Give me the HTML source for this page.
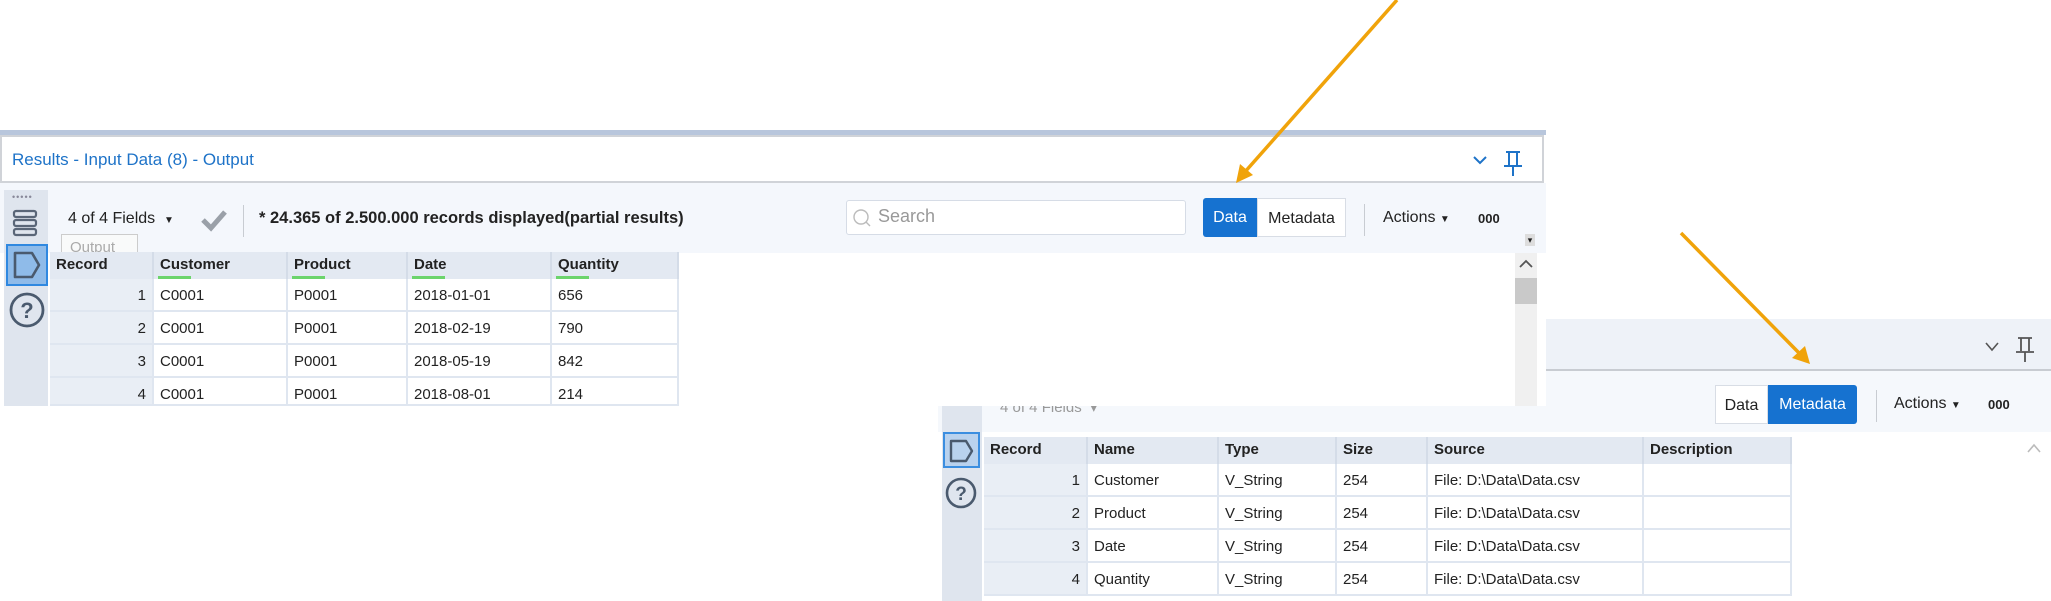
<!DOCTYPE html>
<html><head><meta charset="utf-8"><style>
*{margin:0;padding:0;box-sizing:border-box}
body{width:2051px;height:601px;background:#fff;position:relative;overflow:hidden;font-family:"Liberation Sans",sans-serif;font-size:15px;color:#222}
.a{position:absolute}
.cell{position:absolute;height:33px;line-height:33px;padding-left:6px;background:#fff;border-right:2px solid #dfe6f0;border-bottom:2px solid #dfe6f0;white-space:nowrap}
.rec{background:#e9eef5;text-align:right;padding-right:6px}
.hd{position:absolute;height:27px;line-height:26px;padding-left:6px;background:#e3e9f2;font-weight:bold;border-right:2px solid #d4dce8}
.btn{position:absolute;height:39px;line-height:39px;text-align:center;font-size:16px}
</style></head><body>

<!-- Panel 2 (behind) -->
<div class="a" style="left:938px;top:319px;width:1113px;height:52px;background:#eef2f8;border-bottom:2px solid #c8ccd2"></div>
<div class="a" style="left:938px;top:371px;width:1113px;height:61px;background:#f5f8fc"></div>
<div class="a" style="left:938px;top:432px;width:1113px;height:169px;background:#fff"></div>
<svg class="a" style="left:1984px;top:335px" width="60" height="30"><path d="M2 8 L8 15 L14 8" stroke="#555" stroke-width="1.6" fill="none"/><path d="M34 3 H48 M37 3 V16 M45 3 V16 M32 17 H50 M41 17 V27" stroke="#555" stroke-width="1.8" fill="none"/></svg>
<div class="a" style="left:1000px;top:398px;color:#999;font-size:15px">4 of 4 Fields &nbsp;▾</div>
<div class="btn" style="left:1715px;top:385px;width:53px;background:#fff;border:1px solid #d8dde5">Data</div>
<div class="btn" style="left:1768px;top:385px;width:89px;background:#1672d0;color:#fff;border-radius:0 3px 3px 0">Metadata</div>
<div class="a" style="left:1876px;top:390px;width:1px;height:32px;background:#c8ccd2"></div>
<div class="a" style="left:1894px;top:395px;font-size:16px">Actions <span style="font-size:10px">▼</span></div>
<div class="a" style="left:1988px;top:397px;font-size:13px;font-weight:bold">000</div>
<div class="a" style="left:942px;top:406px;width:40px;height:195px;background:#dfe5ee"></div>
<div class="a" style="left:943px;top:432px;width:37px;height:36px;background:#b9d2ee;border:2px solid #3b8ee0"></div>
<svg class="a" style="left:948px;top:438px" width="28" height="26"><path d="M3 3 H18 L24 13 L18 23 H3 Z" stroke="#4a5a6e" stroke-width="2.4" fill="none" stroke-linejoin="round"/></svg>
<svg class="a" style="left:944px;top:476px" width="34" height="34"><circle cx="17" cy="17" r="14" stroke="#4a5a6e" stroke-width="2.6" fill="none"/><text x="17" y="24" font-size="19" font-weight="bold" text-anchor="middle" fill="#4a5a6e" font-family="Liberation Sans">?</text></svg>
<svg class="a" style="left:2026px;top:442px" width="16" height="14"><path d="M2 10 L8 3 L14 10" stroke="#bbb" stroke-width="1.6" fill="none"/></svg>

<div class="hd" style="left:984px;top:437px;width:104px">Record</div>
<div class="hd" style="left:1088px;top:437px;width:131px">Name</div>
<div class="hd" style="left:1219px;top:437px;width:118px">Type</div>
<div class="hd" style="left:1337px;top:437px;width:91px">Size</div>
<div class="hd" style="left:1428px;top:437px;width:216px">Source</div>
<div class="hd" style="left:1644px;top:437px;width:148px">Description</div>

<div class="cell rec" style="left:984px;top:464px;width:104px">1</div><div class="cell" style="left:1088px;top:464px;width:131px">Customer</div><div class="cell" style="left:1219px;top:464px;width:118px">V_String</div><div class="cell" style="left:1337px;top:464px;width:91px">254</div><div class="cell" style="left:1428px;top:464px;width:216px">File: D:\Data\Data.csv</div><div class="cell" style="left:1644px;top:464px;width:148px"></div>
<div class="cell rec" style="left:984px;top:497px;width:104px">2</div><div class="cell" style="left:1088px;top:497px;width:131px">Product</div><div class="cell" style="left:1219px;top:497px;width:118px">V_String</div><div class="cell" style="left:1337px;top:497px;width:91px">254</div><div class="cell" style="left:1428px;top:497px;width:216px">File: D:\Data\Data.csv</div><div class="cell" style="left:1644px;top:497px;width:148px"></div>
<div class="cell rec" style="left:984px;top:530px;width:104px">3</div><div class="cell" style="left:1088px;top:530px;width:131px">Date</div><div class="cell" style="left:1219px;top:530px;width:118px">V_String</div><div class="cell" style="left:1337px;top:530px;width:91px">254</div><div class="cell" style="left:1428px;top:530px;width:216px">File: D:\Data\Data.csv</div><div class="cell" style="left:1644px;top:530px;width:148px"></div>
<div class="cell rec" style="left:984px;top:563px;width:104px">4</div><div class="cell" style="left:1088px;top:563px;width:131px">Quantity</div><div class="cell" style="left:1219px;top:563px;width:118px">V_String</div><div class="cell" style="left:1337px;top:563px;width:91px">254</div><div class="cell" style="left:1428px;top:563px;width:216px">File: D:\Data\Data.csv</div><div class="cell" style="left:1644px;top:563px;width:148px"></div>

<!-- Panel 1 (front) -->
<div class="a" style="left:0;top:130px;width:1546px;height:5px;background:#b8c6dc"></div>
<div class="a" style="left:0;top:135px;width:1544px;height:48px;background:#fff;border:2px solid #d0d3d8"></div>
<div class="a" style="left:12px;top:150px;color:#1e73c8;font-size:17px">Results - Input Data (8) - Output</div>
<svg class="a" style="left:1472px;top:148px" width="60" height="30"><path d="M2 9 L8 15 L14 9" stroke="#1e73c8" stroke-width="2" fill="none"/><path d="M34 4 H48 M37 4 V17 M45 4 V17 M32 18 H50 M41 18 V28" stroke="#1e73c8" stroke-width="2" fill="none"/></svg>
<div class="a" style="left:0;top:183px;width:1546px;height:70px;background:#f4f7fc"></div>
<div class="a" style="left:0;top:253px;width:1546px;height:153px;background:#fff"></div>
<div class="a" style="left:4px;top:190px;width:44px;height:216px;background:#dfe5ee"></div>
<div class="a" style="left:12px;top:192px;color:#889;font-size:9px;letter-spacing:1px">•••••</div>
<svg class="a" style="left:12px;top:208px" width="30" height="30"><rect x="2" y="3" width="22" height="6" rx="2" stroke="#5a6678" stroke-width="2.2" fill="none"/><rect x="2" y="12" width="22" height="6" rx="2" stroke="#5a6678" stroke-width="2.2" fill="none"/><rect x="2" y="21" width="22" height="6" rx="2" stroke="#5a6678" stroke-width="2.2" fill="none"/></svg>
<div class="a" style="left:6px;top:244px;width:42px;height:42px;background:#8fbbe9;border:2px solid #2f88e0"></div>
<svg class="a" style="left:12px;top:250px" width="32" height="30"><path d="M3 3 H20 L27 15 L20 27 H3 Z" stroke="#4a5a6e" stroke-width="2.6" fill="none" stroke-linejoin="round"/></svg>
<svg class="a" style="left:7px;top:290px" width="40" height="40"><circle cx="20" cy="20" r="16" stroke="#4a5a6e" stroke-width="2.8" fill="none"/><text x="20" y="28" font-size="22" font-weight="bold" text-anchor="middle" fill="#4a5a6e" font-family="Liberation Sans">?</text></svg>
<div class="a" style="left:68px;top:210px;font-size:16px">4 of 4 Fields &nbsp;<span style="font-size:10px">▼</span></div>
<svg class="a" style="left:200px;top:207px" width="28" height="26"><path d="M3 13 L11 21 L25 5" stroke="#9aa0a8" stroke-width="5" fill="none"/></svg>
<div class="a" style="left:243px;top:205px;width:1px;height:32px;background:#c8ccd2"></div>
<div class="a" style="left:259px;top:209px;font-size:16.5px;font-weight:bold">* 24.365 of 2.500.000 records displayed(partial results)</div>
<div class="a" style="left:61px;top:234px;width:77px;height:28px;border:1px solid #ccc;background:rgba(250,250,250,.9);color:#aaa;font-size:15px;line-height:26px;padding-left:8px">Output</div>
<div class="a" style="left:846px;top:200px;width:340px;height:35px;background:#fff;border:1px solid #d6dce6;border-radius:3px"></div>
<svg class="a" style="left:852px;top:208px" width="20" height="20"><circle cx="9" cy="9" r="7" stroke="#bbb" stroke-width="1.4" fill="none"/><path d="M14 14 L18 18" stroke="#bbb" stroke-width="1.4"/></svg>
<div class="a" style="left:878px;top:206px;color:#999;font-size:18px">Search</div>
<div class="btn" style="left:1203px;top:198px;width:54px;background:#1672d0;color:#fff;border-radius:3px 0 0 3px">Data</div>
<div class="btn" style="left:1257px;top:198px;width:89px;background:#fff;border:1px solid #d8dde5">Metadata</div>
<div class="a" style="left:1364px;top:204px;width:1px;height:32px;background:#c8ccd2"></div>
<div class="a" style="left:1383px;top:209px;font-size:16px">Actions <span style="font-size:10px">▼</span></div>
<div class="a" style="left:1478px;top:211px;font-size:13px;font-weight:bold">000</div>
<div class="a" style="left:1515px;top:253px;width:22px;height:153px;background:#f0f0f0"></div>
<div class="a" style="left:1525px;top:234px;width:10px;height:12px;background:#ddd;font-size:9px;line-height:12px;text-align:center">▾</div>
<svg class="a" style="left:1518px;top:258px" width="16" height="12"><path d="M2 9 L8 3 L14 9" stroke="#555" stroke-width="1.8" fill="none"/></svg>
<div class="a" style="left:1515px;top:278px;width:22px;height:26px;background:#c9c9c9"></div>

<div class="hd" style="left:50px;top:252px;width:104px">Record</div>
<div class="hd" style="left:154px;top:252px;width:134px;background-image:linear-gradient(#6cd46c,#6cd46c);background-size:33px 3px;background-position:4px 24px;background-repeat:no-repeat">Customer</div>
<div class="hd" style="left:288px;top:252px;width:120px;background-image:linear-gradient(#6cd46c,#6cd46c);background-size:33px 3px;background-position:4px 24px;background-repeat:no-repeat">Product</div>
<div class="hd" style="left:408px;top:252px;width:144px;background-image:linear-gradient(#6cd46c,#6cd46c);background-size:33px 3px;background-position:4px 24px;background-repeat:no-repeat">Date</div>
<div class="hd" style="left:552px;top:252px;width:127px;background-image:linear-gradient(#6cd46c,#6cd46c);background-size:33px 3px;background-position:4px 24px;background-repeat:no-repeat">Quantity</div>

<div class="cell rec" style="left:50px;top:279px;width:104px">1</div><div class="cell" style="left:154px;top:279px;width:134px">C0001</div><div class="cell" style="left:288px;top:279px;width:120px">P0001</div><div class="cell" style="left:408px;top:279px;width:144px">2018-01-01</div><div class="cell" style="left:552px;top:279px;width:127px">656</div>
<div class="cell rec" style="left:50px;top:312px;width:104px">2</div><div class="cell" style="left:154px;top:312px;width:134px">C0001</div><div class="cell" style="left:288px;top:312px;width:120px">P0001</div><div class="cell" style="left:408px;top:312px;width:144px">2018-02-19</div><div class="cell" style="left:552px;top:312px;width:127px">790</div>
<div class="cell rec" style="left:50px;top:345px;width:104px">3</div><div class="cell" style="left:154px;top:345px;width:134px">C0001</div><div class="cell" style="left:288px;top:345px;width:120px">P0001</div><div class="cell" style="left:408px;top:345px;width:144px">2018-05-19</div><div class="cell" style="left:552px;top:345px;width:127px">842</div>
<div class="cell rec" style="left:50px;top:378px;width:104px;height:28px">4</div><div class="cell" style="left:154px;top:378px;width:134px;height:28px">C0001</div><div class="cell" style="left:288px;top:378px;width:120px;height:28px">P0001</div><div class="cell" style="left:408px;top:378px;width:144px;height:28px">2018-08-01</div><div class="cell" style="left:552px;top:378px;width:127px;height:28px">214</div>

<!-- arrows -->
<svg class="a" style="left:0;top:0" width="2051" height="601">
<line x1="1397" y1="0" x2="1244" y2="173" stroke="#f0a30a" stroke-width="3.5"/>
<path d="M1236 183 L1240 164 L1253 175 Z" fill="#f0a30a"/>
<line x1="1681" y1="233" x2="1801" y2="355" stroke="#f0a30a" stroke-width="3.5"/>
<path d="M1810 364 L1792 358 L1805 346 Z" fill="#f0a30a"/>
</svg>
</body></html>
